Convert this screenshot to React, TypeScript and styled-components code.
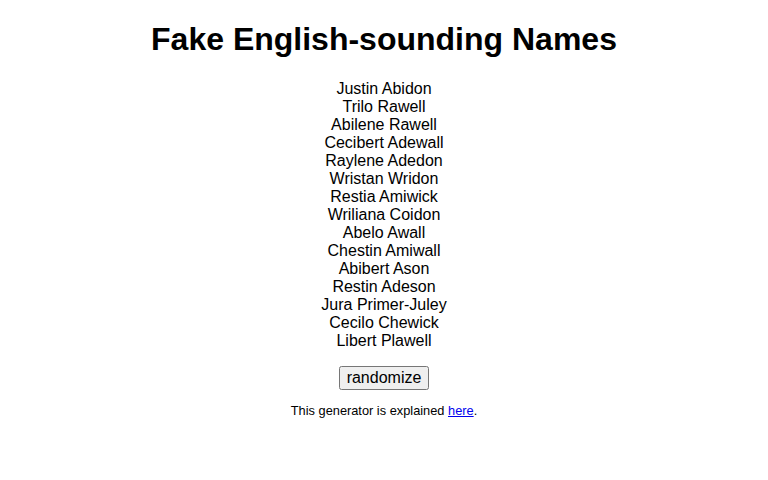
import styled, { createGlobalStyle } from 'styled-components';

const GlobalStyle = createGlobalStyle`
  body {
    margin: 8px;
    font-family: "Liberation Sans", Arial, sans-serif;
    color: #000;
    background: #fff;
  }
`;

const Page = styled.main`
  text-align: center;
`;

const Title = styled.h1`
  font-size: 32px;
  font-weight: bold;
  margin: 13px 0 22px;
`;

const NameList = styled.div`
  font-size: 16px;
  line-height: 18px;
`;

const Name = styled.div``;

const RandomizeButton = styled.button`
  font-family: "Liberation Sans", Arial, sans-serif;
  font-size: 16px;
  margin-top: 16px;
  padding: 1px 6px;
  color: #000;
`;

const Note = styled.p`
  font-size: 12.8px;
  margin: 13px 0;

  a {
    color: #0000ee;
  }
`;

const names = [
  'Justin Abidon',
  'Trilo Rawell',
  'Abilene Rawell',
  'Cecibert Adewall',
  'Raylene Adedon',
  'Wristan Wridon',
  'Restia Amiwick',
  'Wriliana Coidon',
  'Abelo Awall',
  'Chestin Amiwall',
  'Abibert Ason',
  'Restin Adeson',
  'Jura Primer-Juley',
  'Cecilo Chewick',
  'Libert Plawell',
];

export default function App() {
  return (
    <>
      <GlobalStyle />
      <Page>
        <Title>Fake English-sounding Names</Title>
        <NameList>
          {names.map((name) => (
            <Name key={name}>{name}</Name>
          ))}
        </NameList>
        <RandomizeButton type="button">randomize</RandomizeButton>
        <Note>
          This generator is explained <a href="#">here</a>.
        </Note>
      </Page>
    </>
  );
}
